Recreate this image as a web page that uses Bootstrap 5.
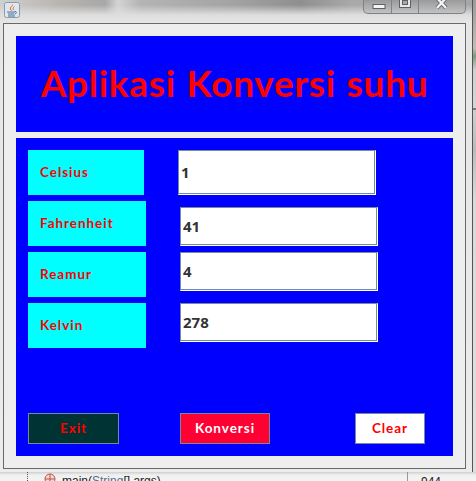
<!DOCTYPE html>
<html lang="id">
<head>
<meta charset="utf-8">
<title>Aplikasi Konversi suhu</title>
<link rel="stylesheet" href="https://cdn.jsdelivr.net/npm/bootstrap@5.3.0/dist/css/bootstrap.min.css">
<style>
html,body{margin:0;width:476px;height:481px;overflow:hidden;background:#e6e6e6}
.desk{width:476px;height:481px;overflow:hidden}
.upper{height:472px}
.glass{width:472px;padding-left:3px;background:linear-gradient(180deg,rgba(235,235,235,0) 0,rgba(235,235,235,0) 5px,#dedede 15px,#e6e6e6 23px,#ececec 100%),linear-gradient(90deg,#cfcfcf 0,#b8b4b0 60px,#a8a8a8 105px,#d4d4d4 118px,#b4b4b4 140px,#a4a4a4 230px,#8f8f8f 300px,#a8a8a8 350px,#b8b0a8 430px,#a6a6a6 100%)}
.sidebar{width:4px;border-left:1px solid #555;background:linear-gradient(180deg,#9c9c9c 0,#c4bcb4 48px,#7c9a7c 56px,#d0d0d0 70px,#d6d6d6 108px,#222 109px,#cfcfcf 110px,#bbb 150px,#dadada 200px,#e0e0e0 100%)}
.titlebar{height:23px;padding-right:6px}
.javaicon{width:16px;height:16px;margin:2px 0 0 1px;display:block}
.winbtns{width:103px;height:14px;margin-right:0;border:1px solid #7c848a;border-top:0;border-radius:0 0 5px 5px;background:linear-gradient(180deg,#9a9a9a,#c2c2c2);overflow:hidden}
.winbtn{height:13px;border-right:1px solid #7c848a}
.winbtn:last-child{border-right:0}
.wb-a{width:28px}.wb-b{width:27px}.wb-c{flex:1}
.winbtn svg{display:block}
.frame{width:463px;height:446px;padding:12px;border:1px solid #696969;background:#eeeeee;gap:6px}
.headpanel{height:96px;background:#0000ff}
.apptitle{margin:0 0 4px;font:700 37px/1 "Lato",sans-serif;letter-spacing:.7px;word-spacing:1px;color:#ff0000}
.bodypanel{height:318px;background:#0000ff;padding:12px;gap:6px}
.fieldrow{gap:34px}
.namecell{width:118px;height:45px;padding-left:12px;background:#00ffff;color:#ff0000;font:700 13.5px/1 "Lato",sans-serif;letter-spacing:.95px}
.namecell-narrow{width:116px}
.numfield.form-control{width:198px;height:39px;padding:0 0 2px 2px;border:1px solid;border-color:#78899a #fff #fff #78899a;border-radius:0;box-shadow:inset -1px -1px 0 #78899a,inset 1px 1px 0 #fff;background:#fff;color:#333;font:700 15px "Noto Sans",sans-serif}
.numfield-tall.form-control{width:198px;height:45px}
.actions{margin-top:59px}
.actbtn.btn{height:31px;padding:0;border:1px solid #78899a;border-radius:0;font:700 13.5px/1 "Lato",sans-serif;letter-spacing:.95px}
.act-exit.btn{width:91px;background:#003333;color:#ff0000}
.act-run.btn{width:90px;margin-left:61px;background:#ff0033;color:#fff}
.act-clear.btn{width:70px;margin-left:85px;background:#fff;color:#ff0000}
.ide{height:9px;background:linear-gradient(180deg,#cfcfcf 0,#f0f0f0 3px,#f4f4f4 100%);overflow:hidden;font:12px/14px "Liberation Sans",sans-serif;color:#222}
.ide-guide{width:1px;height:9px;margin-left:27px;border-left:1px dotted #555}
.ide-mark{display:block;margin:1px 0 0 16px}
.ide-code{margin:2px 0 0 6px;white-space:pre}
.ide-type{color:#5a6f86}
.ide-gutter{width:69px;height:9px;margin-left:auto;border-left:1px solid #999;padding-left:13px;margin-right:0}
.ide-line{margin-top:3px;display:block}
</style>
</head>
<body>
<div class="desk d-flex flex-column">
  <div class="upper d-flex">
    <div class="glass d-flex flex-column">
      <div class="titlebar d-flex justify-content-between align-items-start">
        <svg class="javaicon" viewBox="0 0 16 16" aria-hidden="true">
          <rect x=".5" y=".5" width="15" height="15" rx="2" fill="#dfe6ee" stroke="#8b9bab"/>
          <path d="M9 2c1 2-3 3-2 5 .4 1 1 1.400 1.500 2-2-.5-3.500-2-2.500-3.500C6.700 4.500 8.500 3.700 9 2z" fill="#e2782a"/>
          <path d="M10.500 4.500c-1.500 1-2 2-1 3.500" fill="none" stroke="#e2782a"/>
          <path d="M3 10h8M4 12h6M4 14h7" stroke="#44719c"/>
          <path d="M11 9.500c2 0 2 2-.5 2.500" fill="none" stroke="#44719c"/>
        </svg>
        <div class="winbtns d-flex">
          <div class="winbtn wb-a"><svg width="27" height="13" viewBox="0 0 27 13" aria-hidden="true"><rect x="9" y="4.500" width="12" height="4" fill="#f4f4f4" stroke="#59616a"/></svg></div>
          <div class="winbtn wb-b"><svg width="26" height="13" viewBox="0 0 26 13" aria-hidden="true"><rect x="7.500" y="-2.500" width="11" height="10" fill="#e8e8e8" stroke="#59616a"/><rect x="10.500" y=".5" width="5" height="4" fill="#a8a8a8" stroke="#59616a"/></svg></div>
          <div class="winbtn wb-c"><svg width="46" height="13" viewBox="0 0 46 13" aria-hidden="true"><path d="M18 -2l9 10M27 -2l-9 10" stroke="#59616a" stroke-width="4"/><path d="M18 -2l9 10M27 -2l-9 10" stroke="#f4f4f4" stroke-width="2.400"/></svg></div>
        </div>
      </div>
      <div class="frame d-flex flex-column">
        <div class="headpanel d-flex align-items-center justify-content-center">
          <h1 class="apptitle">Aplikasi Konversi suhu</h1>
        </div>
        <div class="bodypanel d-flex flex-column">
          <div class="fieldrow d-flex">
            <div class="namecell namecell-narrow d-flex align-items-center">Celsius</div>
            <input class="numfield numfield-tall form-control" type="text" value="1" aria-label="Celsius">
          </div>
          <div class="fieldrow d-flex align-items-end">
            <div class="namecell d-flex align-items-center">Fahrenheit</div>
            <input class="numfield form-control" type="text" value="41" aria-label="Fahrenheit">
          </div>
          <div class="fieldrow d-flex align-items-start">
            <div class="namecell d-flex align-items-center">Reamur</div>
            <input class="numfield form-control" type="text" value="4" aria-label="Reamur">
          </div>
          <div class="fieldrow d-flex align-items-start">
            <div class="namecell d-flex align-items-center">Kelvin</div>
            <input class="numfield form-control" type="text" value="278" aria-label="Kelvin">
          </div>
          <div class="actions d-flex">
            <button class="actbtn act-exit btn" type="button">Exit</button>
            <button class="actbtn act-run btn" type="button">Konversi</button>
            <button class="actbtn act-clear btn" type="button">Clear</button>
          </div>
        </div>
      </div>
    </div>
    <div class="sidebar"></div>
  </div>
  <div class="ide d-flex">
    <div class="ide-guide"></div>
    <svg class="ide-mark" width="12" height="12" viewBox="0 0 12 12" aria-hidden="true"><circle cx="6" cy="6" r="5" fill="#f3d8d4" stroke="#b9564b"/><path d="M6 1v10M1 6h10" stroke="#b9564b"/></svg>
    <div class="ide-code">main(<span class="ide-type">String</span>[] args)</div>
    <div class="ide-gutter"><span class="ide-line">944</span></div>
  </div>
</div>
<script src="https://cdn.jsdelivr.net/npm/bootstrap@5.3.0/dist/js/bootstrap.bundle.min.js"></script>
</body>
</html>
